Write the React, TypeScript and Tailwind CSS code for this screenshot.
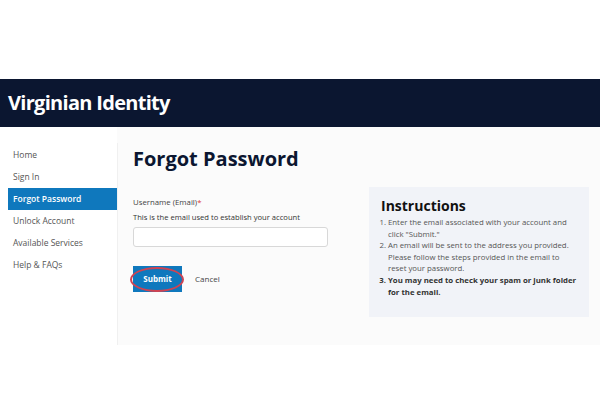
const navItems = ['Home', 'Sign In', 'Forgot Password', 'Unlock Account', 'Available Services', 'Help & FAQs']

export default function App() {
  return (
    <div className="w-[600px] h-[400px] bg-white font-['Open_Sans',sans-serif] text-[#333]">
      <div className="h-[79px]" />
      <header className="h-[48px] bg-[#0b1630] flex items-center px-[8px]">
        <h1 className="text-white font-bold text-[20px] tracking-[-0.7px]">Virginian Identity</h1>
      </header>

      <div className="flex h-[218px] bg-[#fbfbfb]">
        {/* sidebar */}
        <nav className="w-[117px] pl-[8px] pt-[17px] bg-white flex flex-col">
          {navItems.map((item) => (
            <div
              key={item}
              className={
                item === 'Forgot Password'
                  ? 'h-[22px] flex items-center px-[5px] text-[8.5px] font-semibold text-white bg-[#0f78bd]'
                  : 'h-[22px] flex items-center px-[5px] text-[8.5px] text-[#555]'
              }
            >
              {item}
            </div>
          ))}
        </nav>

        {/* main */}
        <main className="flex-1 flex border-l border-[#f0f0f0] mt-[16px]">
          <div className="w-[251px] pl-[15px] -mt-[16px] pt-[20px]">
            <h2 className="text-[20px] font-bold text-[#0b1630] leading-[24px]">Forgot Password</h2>
            <div className="mt-[26px] text-[7.8px] text-[#444]">
              Username (Email)<span className="text-[#d33]">*</span>
            </div>
            <div className="mt-[3px] text-[7.6px] text-[#333]">This is the email used to establish your account</div>
            <div className="mt-[4px] w-[195px] h-[20px] bg-white border border-[#d8d8d8] rounded-[3px]" />
            <div className="mt-[19px] flex items-center">
              <div className="relative w-[49px] h-[26px] bg-[#0f78bd] flex items-center justify-center">
                <span className="text-white text-[8px] font-bold">Submit</span>
                <div className="absolute left-[-3px] right-[-2px] top-[1px] bottom-[0px] border-[2px] border-[#d04352] rounded-[50%]" />
              </div>
              <span className="ml-[13px] text-[8px] text-[#444]">Cancel</span>
            </div>
          </div>

          <div className="pt-[44px]">
            <div className="w-[220px] h-[130px] bg-[#f1f3f8] pl-[12px] pr-[10px] pt-[10px]">
              <h3 className="text-[14px] font-bold text-[#111] leading-[18px]">Instructions</h3>
              <ol className="mt-[2px] pl-[7px] list-decimal text-[7.8px] leading-[11.6px] text-[#555]">
                <li>Enter the email associated with your account and click "Submit."</li>
                <li>An email will be sent to the address you provided. Please follow the steps provided in the email to reset your password.</li>
                <li className="font-bold text-[#333]">You may need to check your spam or junk folder for the email.</li>
              </ol>
            </div>
          </div>
        </main>
      </div>
    </div>
  )
}
